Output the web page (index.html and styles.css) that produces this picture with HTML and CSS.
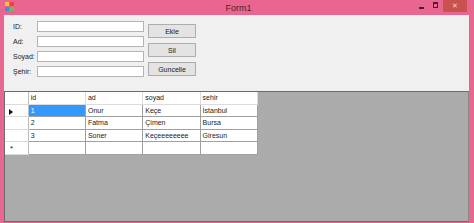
FILE: index.html
```html
<!DOCTYPE html>
<html lang="tr">
<head>
    <meta charset="UTF-8">
    <title>Form1</title>
    <link rel="stylesheet" href="styles.css">
</head>
<body>
    <div class="window">
        <!-- Title bar -->
        <div class="titlebar">
            <svg class="app-icon" width="9" height="9" viewBox="0 0 9 9">
                <rect x="0" y="0" width="4" height="4" fill="#f4c23c"/>
                <rect x="5" y="0" width="4" height="4" fill="#e8483a"/>
                <rect x="0" y="5" width="4" height="4" fill="#3b8ee0"/>
                <rect x="5" y="5" width="4" height="4" fill="#6cc04a"/>
            </svg>
            <div class="title">Form1</div>
            <div class="controls">
                <span class="ctl-min"></span>
                <span class="ctl-max"></span>
                <span class="ctl-close">&#x2715;</span>
            </div>
        </div>

        <div class="client">
            <!-- Input area -->
            <div class="form-area">
                <div class="fields">
                    <div class="field"><label>ID:</label><input type="text"></div>
                    <div class="field"><label>Ad:</label><input type="text"></div>
                    <div class="field"><label>Soyad:</label><input type="text"></div>
                    <div class="field"><label>Şehir:</label><input type="text"></div>
                </div>
                <div class="buttons">
                    <button>Ekle</button>
                    <button>Sil</button>
                    <button>Guncelle</button>
                </div>
            </div>

            <!-- Data grid -->
            <div class="grid-view">
                <table class="grid">
                    <thead>
                        <tr>
                            <th class="row-head"></th>
                            <th>id</th>
                            <th>ad</th>
                            <th>soyad</th>
                            <th>sehir</th>
                        </tr>
                    </thead>
                    <tbody>
                        <tr>
                            <td class="row-head"><span class="arrow"></span></td>
                            <td class="selected">1</td>
                            <td>Onur</td>
                            <td>Keçe</td>
                            <td>İstanbul</td>
                        </tr>
                        <tr>
                            <td class="row-head"></td>
                            <td>2</td>
                            <td>Fatma</td>
                            <td>Çimen</td>
                            <td>Bursa</td>
                        </tr>
                        <tr>
                            <td class="row-head"></td>
                            <td>3</td>
                            <td>Soner</td>
                            <td>Keçeeeeeeee</td>
                            <td>Giresun</td>
                        </tr>
                        <tr class="new-row">
                            <td class="row-head"><span class="star">*</span></td>
                            <td></td>
                            <td></td>
                            <td></td>
                            <td></td>
                        </tr>
                    </tbody>
                </table>
            </div>
        </div>
    </div>
</body>
</html>
```

FILE: styles.css
```css
:root {
    --frame: #e8668f;
    --client: #f0f0f0;
    --grid-bg: #ababab;
    --line: #a0a0a0;
    --text: #1a1a1a;
}

* {
    margin: 0;
    padding: 0;
    box-sizing: border-box;
}

body {
    width: 474px;
    height: 223px;
    overflow: hidden;
    font-family: 'Liberation Sans', Arial, sans-serif;
    color: var(--text);
    -webkit-font-smoothing: antialiased;
}

.window {
    width: 474px;
    height: 223px;
    background: var(--frame);
    display: flex;
    flex-direction: column;
    padding: 0 5px 1px 4px;
}

/* Title bar */
.titlebar {
    height: 15px;
    position: relative;
    display: flex;
    align-items: center;
    justify-content: center;
}

.app-icon {
    position: absolute;
    left: 1px;
    top: 2px;
}

.title {
    font-size: 9px;
    color: #4a2432;
    margin-left: 4px;
}

.controls {
    position: absolute;
    right: 2px;
    top: 0;
    display: flex;
    align-items: flex-start;
}

.ctl-min {
    width: 5px;
    height: 2px;
    background: #3c2530;
    margin: 7px 9px 0 0;
}

.ctl-max {
    width: 5px;
    height: 6px;
    border: 1px solid #3c2530;
    border-top-width: 2px;
    margin: 2px 5px 0 0;
}

.ctl-close {
    width: 24px;
    height: 12px;
    background: #c9514f;
    color: #f4dada;
    font-size: 7px;
    line-height: 12px;
    text-align: center;
}

/* Client area */
.client {
    flex: 1;
    background: var(--client);
    display: flex;
    flex-direction: column;
}

.form-area {
    height: 76px;
    display: flex;
    padding-left: 9px;
}

.fields {
    display: flex;
    flex-direction: column;
    gap: 4px;
    padding-top: 6px;
}

.field {
    display: flex;
    align-items: center;
    height: 11px;
}

.field label {
    width: 24px;
    font-size: 7px;
}

.field input {
    width: 107px;
    height: 11px;
    border: 1px solid #b4b4b4;
    background: #fff;
}

.buttons {
    display: flex;
    flex-direction: column;
    gap: 5px;
    padding-top: 9px;
    margin-left: 4px;
}

.buttons button {
    width: 48px;
    height: 14px;
    border: 1px solid #adadad;
    background: #e3e3e3;
    font-family: inherit;
    font-size: 7px;
    color: var(--text);
}

/* Data grid */
.grid-view {
    flex: 1;
    background: var(--grid-bg);
    border: 1px solid #6b6b6b;
    border-right-color: #8a8a8a;
}

.grid {
    border-collapse: collapse;
    table-layout: fixed;
    width: 253px;
    font-size: 7px;
}

.grid th,
.grid td {
    background: #fff;
    border-right: 1px solid var(--line);
    border-bottom: 1px solid var(--line);
    text-align: left;
    font-weight: normal;
    padding: 0 0 0 2px;
    white-space: nowrap;
    overflow: hidden;
    width: 57px;
}

.grid th {
    height: 12px;
    border-right-color: #dcdcdc;
    border-bottom-color: #dcdcdc;
}

.grid td {
    height: 12.5px;
}

.grid .row-head {
    width: 23px;
    border-right-color: #bcbcbc;
    border-bottom-color: #dcdcdc;
    position: relative;
}

.grid td.selected {
    background: #3399ff;
    color: #fff;
}

.arrow {
    position: absolute;
    left: 4px;
    top: 4px;
    width: 0;
    height: 0;
    border-top: 3px solid transparent;
    border-bottom: 3px solid transparent;
    border-left: 4px solid #111;
}

.star {
    position: absolute;
    left: 5px;
    top: 2px;
    font-size: 8px;
}
```
